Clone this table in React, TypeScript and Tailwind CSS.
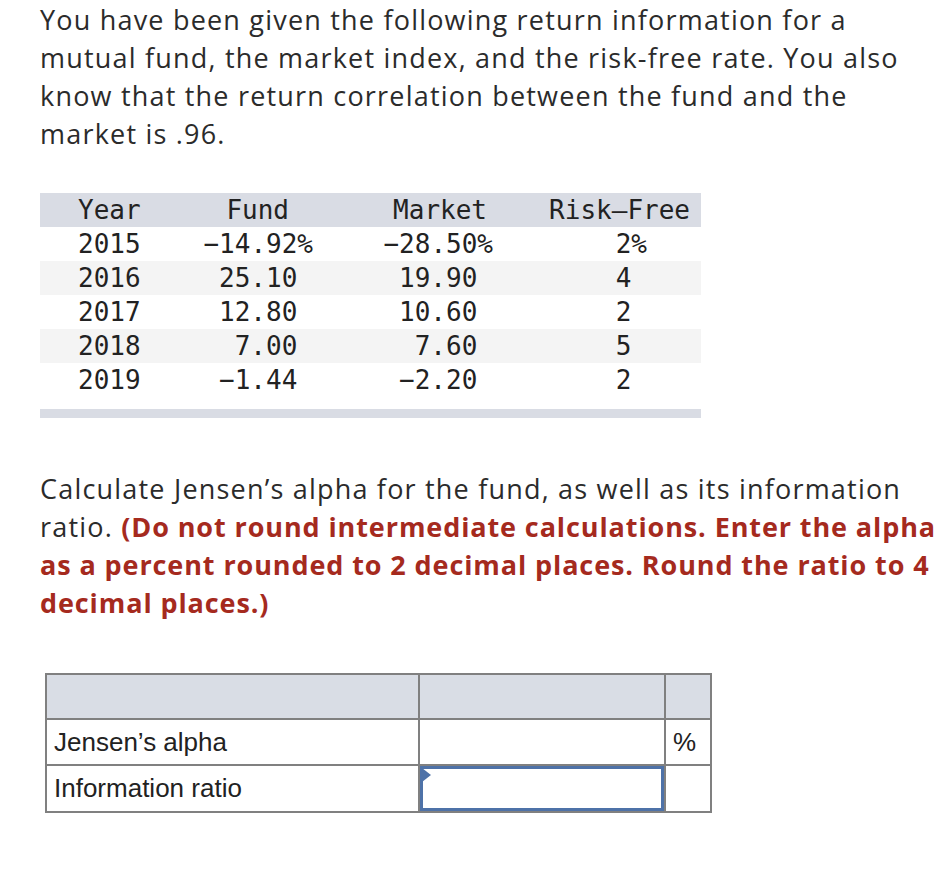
const rows = [
  { year: "2015", fund: "−14.92", market: "−28.50", rf: "2", pct: true },
  { year: "2016", fund: "25.10", market: "19.90", rf: "4", pct: false },
  { year: "2017", fund: "12.80", market: "10.60", rf: "2", pct: false },
  { year: "2018", fund: "7.00", market: "7.60", rf: "5", pct: false },
  { year: "2019", fund: "−1.44", market: "−2.20", rf: "2", pct: false },
]

const Pct = ({ show }: { show: boolean }) => (
  <span className={show ? "" : "invisible"}>%</span>
)

function ReturnsTable() {
  return (
    <div className="w-[661px] font-['DejaVu_Sans_Mono',monospace] text-[26px] leading-[34px] text-[#222]">
      <div className="flex bg-[#d9dce4]">
        <div className="w-[120px] pl-[38px]">Year</div>
        <div className="w-[170px] text-right pr-[41px]">Fund</div>
        <div className="w-[190px] text-right pr-[33px]">Market</div>
        <div className="w-[181px] text-right pr-[11px]">Risk–Free</div>
      </div>
      {rows.map((r, i) => (
        <div key={r.year} className={`flex ${i % 2 === 1 ? "bg-[#f4f4f4]" : "bg-white"}`}>
          <div className="w-[120px] pl-[38px]">{r.year}</div>
          <div className="w-[170px] text-right pr-[17px]">
            {r.fund}
            <Pct show={r.pct} />
          </div>
          <div className="w-[190px] text-right pr-[27px]">
            {r.market}
            <Pct show={r.pct} />
          </div>
          <div className="w-[181px] text-right pr-[54px]">
            {r.rf}
            <Pct show={r.pct} />
          </div>
        </div>
      ))}
      <div className="h-[12px]" />
      <div className="h-[9px] bg-[#d9dce4]" />
    </div>
  )
}

function AnswerTable() {
  return (
    <div className="ml-[5px] w-[667px] border-2 border-[#808080] font-['Liberation_Sans',Arial,sans-serif] text-[26px] text-[#222]">
      <div className="grid grid-cols-[373px_246px_1fr] h-[45px] bg-[#d9dde5] border-b-2 border-[#808080]">
        <div className="border-r-2 border-[#808080]" />
        <div className="border-r-2 border-[#808080]" />
        <div />
      </div>
      <div className="grid grid-cols-[373px_246px_1fr] h-[46px] border-b-2 border-[#808080]">
        <div className="border-r-2 border-[#808080] pl-[7px] flex items-center">Jensen’s alpha</div>
        <div className="border-r-2 border-[#808080]" />
        <div className="flex items-center pl-[7px]">%</div>
      </div>
      <div className="grid grid-cols-[373px_246px_1fr] h-[45px]">
        <div className="border-r-2 border-[#808080] pl-[7px] flex items-center">Information ratio</div>
        <div className="border-r-2 border-[#808080] relative">
          <div className="h-full border-[3px] border-[#4e72a8] bg-white" />
          <svg className="absolute left-[2px] top-[2px]" width="9" height="14" viewBox="0 0 9 14">
            <polygon points="0,0 9,7 0,14" fill="#4e72a8" />
          </svg>
        </div>
        <div />
      </div>
    </div>
  )
}

export default function App() {
  return (
    <div className="w-[949px] h-[870px] bg-white pl-[40px] pt-[1px] font-['Open_Sans',sans-serif] text-[#2b2b2b]">
      <p className="w-[880px] text-[27px] leading-[38px] tracking-[1.2px]">
        You have been given the following return information for a mutual fund, the market index, and
        the risk-free rate. You also know that the return correlation between the fund and the market
        is .96.
      </p>
      <div className="mt-[40px]">
        <ReturnsTable />
      </div>
      <p className="mt-[52px] w-[909px] text-[27px] leading-[38px] tracking-[1.2px]">
        Calculate Jensen’s alpha for the fund, as well as its information ratio.{" "}
        <span className="font-bold text-[#a52a1e] tracking-[0.9px]">
          (Do not round intermediate calculations. Enter the alpha as a percent rounded to 2 decimal
          places. Round the ratio to 4 decimal places.)
        </span>
      </p>
      <div className="mt-[51px]">
        <AnswerTable />
      </div>
    </div>
  )
}
